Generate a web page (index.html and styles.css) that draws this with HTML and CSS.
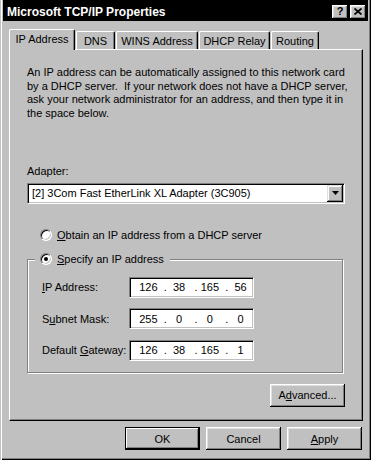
FILE: index.html
```html
<!DOCTYPE html>
<html>
<head>
<meta charset="utf-8">
<title>Microsoft TCP/IP Properties</title>
<link rel="stylesheet" href="styles.css">
</head>
<body>
<div class="window">
  <div class="titlebar">
    <span class="title">Microsoft TCP/IP Properties</span>
    <div class="title-buttons">
      <span class="tbtn help">?</span>
      <span class="tbtn close"><svg width="8" height="7" viewBox="0 0 8 7"><path d="M0.5 0.5 L7.5 6.5 M7.5 0.5 L0.5 6.5" stroke="#000" stroke-width="1.7" fill="none"/></svg></span>
    </div>
  </div>
  <div class="tabs">
    <div class="tab active w-ip">IP Address</div>
    <div class="tab w-dns">DNS</div>
    <div class="tab w-wins">WINS Address</div>
    <div class="tab w-dhcp">DHCP Relay</div>
    <div class="tab w-routing">Routing</div>
  </div>
  <div class="panel">
    <p class="intro">An IP address can be automatically assigned to this network card<br>by a DHCP server.&nbsp; If your network does not have a DHCP server,<br>ask your network administrator for an address, and then type it in<br>the space below.</p>
    <div class="label-line">Adapter:</div>
    <div class="combo">
      <span class="combo-text">[2] 3Com Fast EtherLink XL Adapter (3C905)</span>
      <span class="combo-btn"><svg width="7" height="4" viewBox="0 0 7 4"><polygon points="0,0 7,0 3.5,4" fill="#000"/></svg></span>
    </div>
    <div class="radio-row">
      <span class="radio"></span>
      <span><u>O</u>btain an IP address from a DHCP server</span>
    </div>
    <div class="group">
      <div class="legend">
        <span class="radio checked"></span>
        <span><u>S</u>pecify an IP address</span>
      </div>
      <div class="field-row first">
        <span class="field-label"><u>I</u>P Address:</span>
        <span class="ip"><span class="seg">126</span><span class="dot">.</span><span class="seg">38</span><span class="dot">.</span><span class="seg">165</span><span class="dot">.</span><span class="seg">56</span></span>
      </div>
      <div class="field-row">
        <span class="field-label">S<u>u</u>bnet Mask:</span>
        <span class="ip"><span class="seg">255</span><span class="dot">.</span><span class="seg">0</span><span class="dot">.</span><span class="seg">0</span><span class="dot">.</span><span class="seg">0</span></span>
      </div>
      <div class="field-row">
        <span class="field-label">Default <u>G</u>ateway:</span>
        <span class="ip"><span class="seg">126</span><span class="dot">.</span><span class="seg">38</span><span class="dot">.</span><span class="seg">165</span><span class="dot">.</span><span class="seg">1</span></span>
      </div>
    </div>
    <button class="btn advanced">A<u>d</u>vanced...</button>
  </div>
  <div class="footer">
    <button class="btn default">OK</button>
    <button class="btn">Cancel</button>
    <button class="btn"><u>A</u>pply</button>
  </div>
</div>
</body>
</html>
```
FILE: styles.css
```css
* { box-sizing: border-box; }
html, body { margin: 0; padding: 0; }
body {
  width: 371px;
  height: 460px;
  overflow: hidden;
  background: #c0c0c0;
  font-family: "Liberation Sans", Arial, sans-serif;
  font-size: 11px;
  color: #000;
}
.window {
  width: 371px;
  height: 460px;
  background: #c0c0c0;
  display: flex;
  flex-direction: column;
  box-shadow: inset 1px 0 #c0c0c0, inset 2px 0 #fff, inset -1px -1px #000, inset -2px -2px #808080;
}
.titlebar {
  height: 21px;
  margin: 0 3px;
  padding: 2px 2px 0 4px;
  background: #000;
  color: #fff;
  display: flex;
  align-items: center;
  justify-content: space-between;
}
.title { font-weight: bold; font-size: 12px; white-space: nowrap; }
.title-buttons { display: flex; gap: 2px; }
.tbtn {
  width: 16px;
  height: 14px;
  background: #c0c0c0;
  color: #000;
  display: flex;
  align-items: center;
  justify-content: center;
  font-weight: bold;
  font-size: 11px;
  line-height: 1;
  box-shadow: inset -1px -1px #000, inset 1px 1px #fff, inset -2px -2px #808080, inset 2px 2px #dfdfdf;
}
.tabs {
  display: flex;
  align-items: flex-end;
  height: 20px;
  margin: 8px 0 0 9px;
}
.tab {
  height: 18px;
  margin-left: 1px;
  padding-top: 2px;
  line-height: 14px;
  text-align: center;
  white-space: nowrap;
  background: #c0c0c0;
  border-top: 1px solid #fff;
  border-left: 1px solid #fff;
  border-right: 1px solid #000;
  border-radius: 2px 2px 0 0;
  box-shadow: inset -1px 0 #808080;
}
.tab.active {
  height: 21px;
  margin-left: 0;
  margin-bottom: -1px;
  padding-top: 2px;
  position: relative;
  z-index: 1;
}
.w-ip { width: 66px; }
.w-dns { width: 39px; }
.w-wins { width: 82px; }
.w-dhcp { width: 71px; }
.w-routing { width: 48px; }
.panel {
  margin-left: 9px;
  width: 354px;
  height: 372px;
  padding: 16px 17px 0 17px;
  border-top: 1px solid #fff;
  border-left: 1px solid #fff;
  border-right: 1px solid #000;
  border-bottom: 1px solid #000;
  box-shadow: inset -1px -1px #808080;
  display: flex;
  flex-direction: column;
}
.intro {
  margin: 0;
  line-height: 13.67px;
  white-space: nowrap;
}
.label-line {
  margin-top: 43px;
  line-height: 14px;
}
.combo {
  margin-top: 5px;
  height: 21px;
  padding: 1px 1px 1px 4px;
  display: flex;
  align-items: center;
  justify-content: space-between;
  background: #fff;
  border: 1px solid;
  border-color: #808080 #fff #fff #808080;
  box-shadow: inset 1px 1px #000, inset -1px -1px #c0c0c0;
}
.combo-text { white-space: nowrap; }
.combo-btn {
  width: 16px;
  height: 17px;
  background: #c0c0c0;
  display: flex;
  align-items: center;
  justify-content: center;
  box-shadow: inset -1px -1px #000, inset 1px 1px #dfdfdf, inset -2px -2px #808080, inset 2px 2px #fff;
}
.radio-row {
  margin-top: 24px;
  height: 14px;
  padding-left: 13px;
  display: flex;
  align-items: center;
  gap: 5px;
  white-space: nowrap;
}
.radio {
  width: 12px;
  height: 12px;
  flex: none;
  border-radius: 50%;
  background: #fff;
  border: 1px solid;
  border-color: #808080 #fff #fff #808080;
  box-shadow: inset 1px 1px #000, inset -1px -1px #c0c0c0;
  display: flex;
  align-items: center;
  justify-content: center;
}
.radio.checked::after {
  content: "";
  width: 4px;
  height: 4px;
  border-radius: 50%;
  background: #000;
}
.group {
  margin-top: 17px;
  width: 316px;
  padding: 0 0 11px 14px;
  border: 1px solid #808080;
  box-shadow: inset 1px 1px #fff, 1px 1px #fff;
  display: flex;
  flex-direction: column;
}
.legend {
  align-self: flex-start;
  margin: -8px 0 0 -7px;
  padding: 0 6px 0 5px;
  height: 14px;
  background: #c0c0c0;
  display: flex;
  align-items: center;
  gap: 5px;
  white-space: nowrap;
}
.field-row {
  margin-top: 10.5px;
  height: 21px;
  display: flex;
  align-items: center;
}
.field-row.first { margin-top: 11px; }
.field-label { width: 87px; white-space: nowrap; }
.ip {
  width: 125px;
  height: 21px;
  padding-left: 6px;
  display: flex;
  align-items: center;
  background: #fff;
  border: 1px solid;
  border-color: #808080 #fff #fff #808080;
  box-shadow: inset 1px 1px #000, inset -1px -1px #c0c0c0;
}
.seg { width: 25px; text-align: center; }
.dot { width: 6px; text-align: right; }
.btn {
  width: 75px;
  height: 23px;
  padding: 0;
  border: none;
  background: #c0c0c0;
  font-family: inherit;
  font-size: 11px;
  color: #000;
  box-shadow: inset -1px -1px #000, inset 1px 1px #fff, inset -2px -2px #808080, inset 2px 2px #dfdfdf;
}
.btn.advanced {
  align-self: flex-end;
  margin-top: 11px;
}
.btn.default {
  box-shadow: inset 0 0 0 1px #000, inset -2px -2px #000, inset 2px 2px #fff, inset -3px -3px #808080;
}
.footer {
  margin-top: 6px;
  padding-right: 9px;
  display: flex;
  justify-content: flex-end;
  gap: 6px;
}
```
